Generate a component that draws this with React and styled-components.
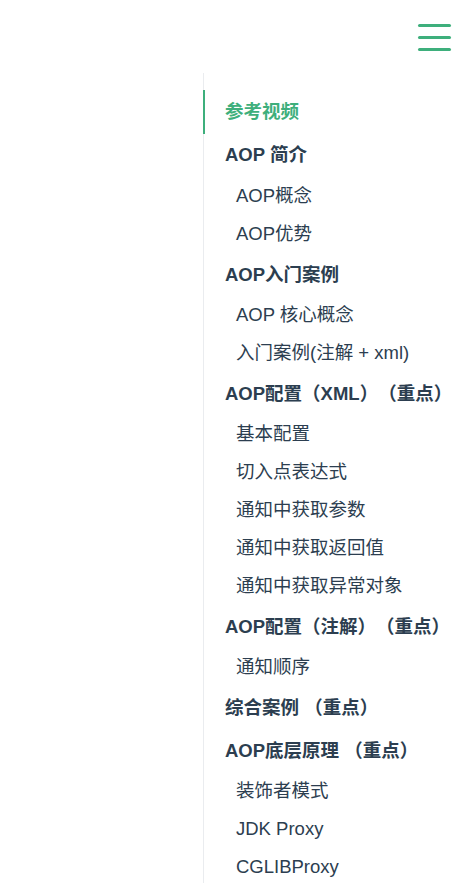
import styled, { createGlobalStyle } from "styled-components";

const GlobalStyle = createGlobalStyle`
  html, body {
    margin: 0;
    padding: 0;
    background: #fff;
  }
  body {
    font-family: "Liberation Sans", "Noto Sans CJK SC", sans-serif;
    color: #2c3e50;
    -webkit-font-smoothing: antialiased;
    text-spacing-trim: space-all;
  }
`;

const Page = styled.div`
  width: 474px;
  min-height: 883px;
  overflow: hidden;
`;

const Header = styled.header`
  height: 73px;
  display: flex;
  align-items: center;
  justify-content: flex-end;
  padding-right: 23px;
  box-sizing: border-box;
`;

const MenuButton = styled.button`
  width: 33px;
  height: 27px;
  margin-top: 1px;
  padding: 0;
  border: none;
  background: none;
  display: flex;
  flex-direction: column;
  justify-content: space-between;
  cursor: pointer;
`;

const Bar = styled.span`
  display: block;
  height: 3px;
  border-radius: 2px;
  background: #3eaf7c;
`;

const Sidebar = styled.nav`
  margin-left: 203px;
  border-left: 1px solid #eaecef;
  min-height: 810px;
  padding-top: 17px;
  box-sizing: border-box;
`;

const List = styled.ul`
  list-style: none;
  margin: 0;
  padding: 0;
`;

const Heading = styled.li`
  position: relative;
  padding: ${(p) => (p.$active ? "9px" : "8.45px")} 0 ${(p) => (p.$active ? "9px" : "8.45px")} 21px;
  line-height: 26px;
  font-size: 18.5px;
  font-weight: 700;
  color: ${(p) => (p.$active ? "#3eaf7c" : "#2c3e50")};
  white-space: nowrap;

  &::before {
    content: "";
    display: ${(p) => (p.$active ? "block" : "none")};
    position: absolute;
    left: -1px;
    top: 0;
    bottom: 0;
    width: 2px;
    background: #3eaf7c;
  }
`;

const SubItem = styled.li`
  padding: 6.05px 0 6.05px 32px;
  line-height: 26px;
  font-size: 18.5px;
  font-weight: 400;
  color: #2c3e50;
  white-space: nowrap;
`;

const sections = [
  { title: "参考视频", active: true, items: [] },
  { title: "AOP 简介", items: ["AOP概念", "AOP优势"] },
  { title: "AOP入门案例", items: ["AOP 核心概念", "入门案例(注解 + xml)"] },
  {
    title: "AOP配置（XML）（重点）",
    items: ["基本配置", "切入点表达式", "通知中获取参数", "通知中获取返回值", "通知中获取异常对象"],
  },
  { title: "AOP配置（注解）（重点）", items: ["通知顺序"] },
  { title: "综合案例 （重点）", items: [] },
  { title: "AOP底层原理 （重点）", items: ["装饰者模式", "JDK Proxy", "CGLIBProxy"] },
];

export default function App() {
  return (
    <Page>
      <GlobalStyle />
      <Header>
        <MenuButton aria-label="menu">
          <Bar />
          <Bar />
          <Bar />
        </MenuButton>
      </Header>
      <Sidebar>
        <List>
          {sections.map((s) => [
            <Heading key={s.title} $active={s.active}>
              {s.title}
            </Heading>,
            ...s.items.map((item) => <SubItem key={item}>{item}</SubItem>),
          ])}
        </List>
      </Sidebar>
    </Page>
  );
}
